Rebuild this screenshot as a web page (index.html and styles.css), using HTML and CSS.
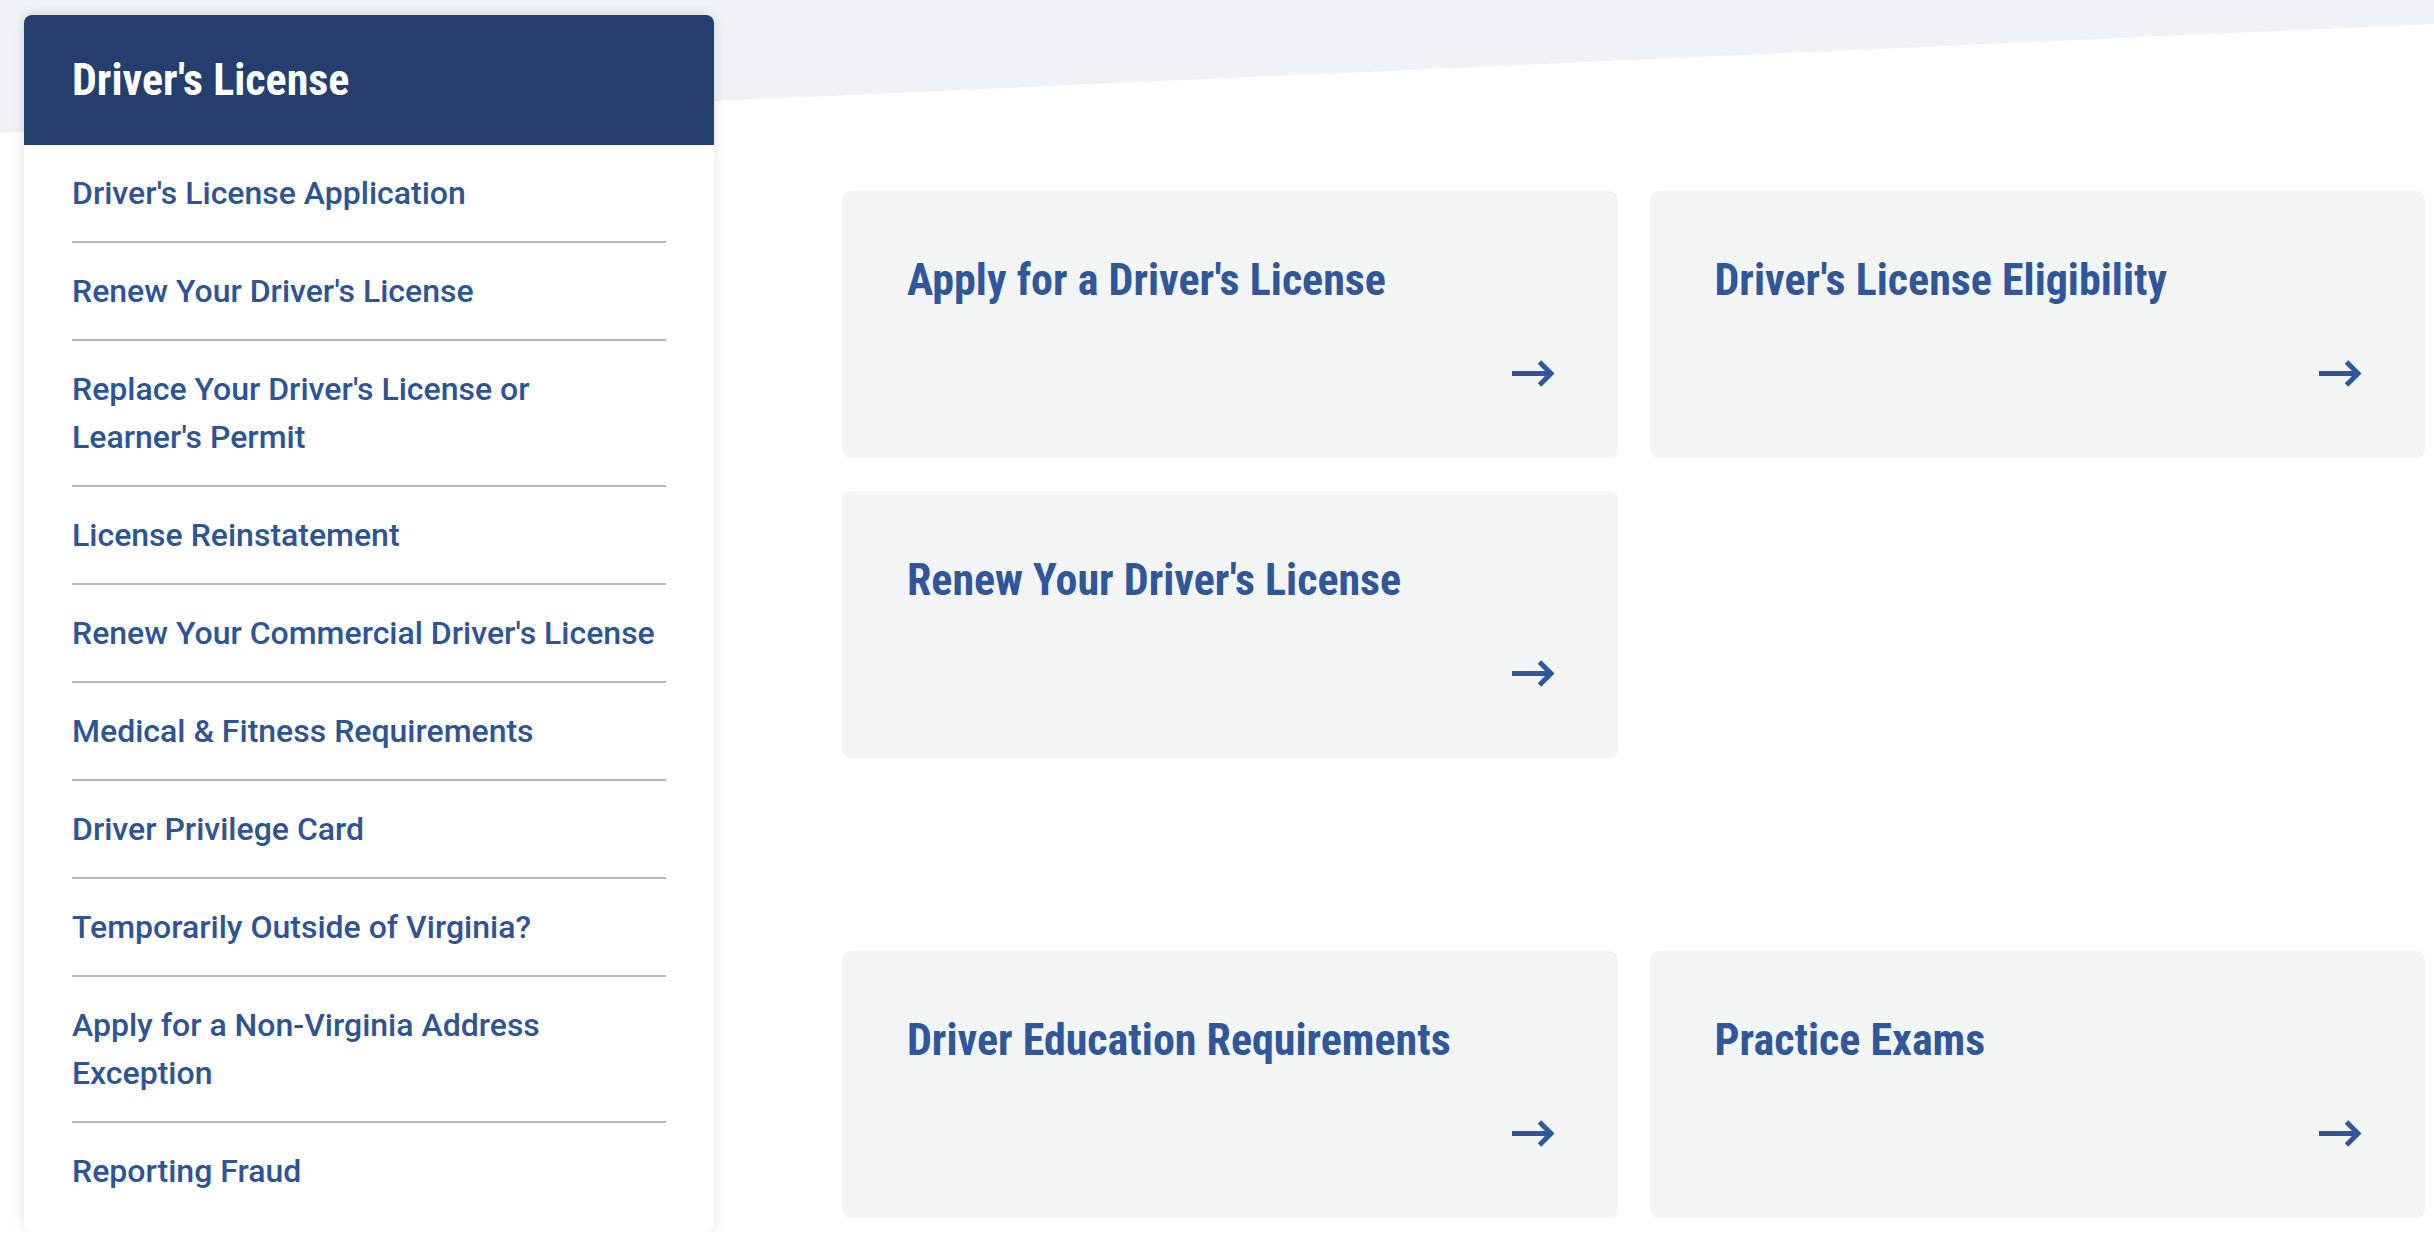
FILE: index.html
```html
<!DOCTYPE html>
<html lang="en">
<head>
    <meta charset="UTF-8">
    <meta name="viewport" content="width=device-width, initial-scale=1.0">
    <title>Driver's License</title>
    <link rel="stylesheet" href="styles.css">
</head>
<body>
    <div class="band"></div>

    <div class="page">
        <aside class="side-nav">
            <h2 class="side-nav-title">Driver's License</h2>
            <ul class="side-nav-list">
                <li><a href="#">Driver's License Application</a></li>
                <li><a href="#">Renew Your Driver's License</a></li>
                <li><a href="#">Replace Your Driver's License or Learner's Permit</a></li>
                <li><a href="#">License Reinstatement</a></li>
                <li><a href="#">Renew Your Commercial Driver's License</a></li>
                <li><a href="#">Medical &amp; Fitness Requirements</a></li>
                <li><a href="#">Driver Privilege Card</a></li>
                <li><a href="#">Temporarily Outside of Virginia?</a></li>
                <li><a href="#">Apply for a Non-Virginia Address Exception</a></li>
                <li><a href="#">Reporting Fraud</a></li>
            </ul>
        </aside>

        <main class="content">
            <section class="tile-grid">
                <a class="tile" href="#">
                    <h3 class="tile-title">Apply for a Driver's License</h3>
                    <span class="tile-arrow">
                        <svg width="42" height="27" viewBox="0 0 42 27"><path d="M0 13.5H39M27.5 2L39 13.5 27.5 25" /></svg>
                    </span>
                </a>
                <a class="tile" href="#">
                    <h3 class="tile-title">Driver's License Eligibility</h3>
                    <span class="tile-arrow">
                        <svg width="42" height="27" viewBox="0 0 42 27"><path d="M0 13.5H39M27.5 2L39 13.5 27.5 25" /></svg>
                    </span>
                </a>
                <a class="tile" href="#">
                    <h3 class="tile-title">Renew Your Driver's License</h3>
                    <span class="tile-arrow">
                        <svg width="42" height="27" viewBox="0 0 42 27"><path d="M0 13.5H39M27.5 2L39 13.5 27.5 25" /></svg>
                    </span>
                </a>
            </section>

            <section class="tile-grid tile-grid-second">
                <a class="tile" href="#">
                    <h3 class="tile-title">Driver Education Requirements</h3>
                    <span class="tile-arrow">
                        <svg width="42" height="27" viewBox="0 0 42 27"><path d="M0 13.5H39M27.5 2L39 13.5 27.5 25" /></svg>
                    </span>
                </a>
                <a class="tile" href="#">
                    <h3 class="tile-title">Practice Exams</h3>
                    <span class="tile-arrow">
                        <svg width="42" height="27" viewBox="0 0 42 27"><path d="M0 13.5H39M27.5 2L39 13.5 27.5 25" /></svg>
                    </span>
                </a>
            </section>
        </main>
    </div>
</body>
</html>
```

FILE: styles.css
```css
/* Page base */
body {
    margin: 0;
    background-color: #ffffff;
    font-family: Roboto, "Liberation Sans", sans-serif;
    overflow: hidden;
    position: relative;
}

/* Light slanted band behind the top of the page */
.band {
    position: absolute;
    top: 0;
    left: 0;
    width: 100%;
    height: 133px;
    background-color: #eff2f7;
    clip-path: polygon(0 0, 100% 0, 100% 24px, 0 100%);
    z-index: 0;
}

.page {
    position: relative;
    z-index: 1;
    display: flex;
    align-items: flex-start;
    padding: 15px 9px 0 24px;
}

/* Sidebar */
.side-nav {
    width: 690px;
    flex-shrink: 0;
    background-color: #ffffff;
    border-radius: 8px;
    box-shadow: 0 0 12px rgba(0, 0, 0, 0.13);
    padding-bottom: 13px;
}

.side-nav-title {
    margin: 0;
    height: 130px;
    display: flex;
    align-items: center;
    padding: 0 48px;
    background-color: #243f6e;
    border-radius: 8px 8px 0 0;
    color: #ffffff;
    font-family: "Roboto Condensed", Roboto, sans-serif;
    font-weight: 700;
    font-size: 44px;
    line-height: 54px;
}

.side-nav-list {
    list-style: none;
    margin: 0;
    padding: 0 48px;
}

.side-nav-list li {
    padding: 24px 0;
    border-bottom: 2px solid #b4b7bb;
}

.side-nav-list li:last-child {
    border-bottom: none;
}

.side-nav-list a {
    display: block;
    color: #2e5497;
    text-decoration: none;
    font-size: 32px;
    font-weight: 500;
    line-height: 48px;
}

/* Tiles */
.content {
    flex: 1;
    margin-left: 128px;
    padding-top: 176px;
}

.tile-grid {
    display: grid;
    grid-template-columns: 1fr 1fr;
    column-gap: 32px;
    row-gap: 33px;
}

.tile-grid-second {
    margin-top: 193px;
}

.tile {
    display: flex;
    flex-direction: column;
    height: 267px;
    box-sizing: border-box;
    padding: 62px 64px 71px 65px;
    background-color: #f3f5f5;
    border-radius: 8px;
    text-decoration: none;
}

.tile-title {
    margin: 0;
    color: #30569c;
    font-family: "Roboto Condensed", Roboto, sans-serif;
    font-weight: 700;
    font-size: 44px;
    line-height: 54px;
}

.tile-arrow {
    margin-top: auto;
    align-self: flex-end;
    height: 27px;
}

.tile-arrow svg {
    display: block;
    fill: none;
    stroke: #30569c;
    stroke-width: 5;
}
```
